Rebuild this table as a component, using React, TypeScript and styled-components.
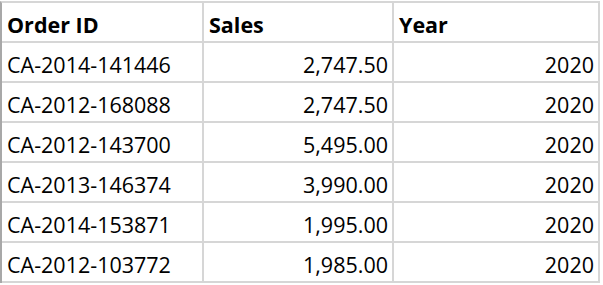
import { Fragment } from "react";
import { createGlobalStyle, styled } from "styled-components";

const GlobalStyle = createGlobalStyle`
  html, body {
    margin: 0;
    padding: 0;
    background: #ffffff;
  }
  body {
    font-family: "Open Sans", "Liberation Sans", sans-serif;
    color: #000000;
  }
`;

const Sheet = styled.div`
  display: grid;
  grid-template-columns: 202px 190px 206px;
  width: max-content;
  margin-top: 1px;
  border-top: 2px solid #d6d6d6;
  border-left: 2px solid #a8a8a8;
`;

const Cell = styled.div<{ $align?: "left" | "right"; $head?: boolean }>`
  box-sizing: border-box;
  height: 40px;
  display: flex;
  align-items: flex-end;
  justify-content: ${(p) => (p.$align === "right" ? "flex-end" : "flex-start")};
  padding: 0 4px 2px 5px;
  border-right: 2px solid #d6d6d6;
  border-bottom: 2px solid #d6d6d6;
  font-size: 21.5px;
  font-weight: ${(p) => (p.$head ? 700 : 400)};
  white-space: nowrap;
`;

const rows = [
  { id: "CA-2014-141446", sales: "2,747.50", year: "2020" },
  { id: "CA-2012-168088", sales: "2,747.50", year: "2020" },
  { id: "CA-2012-143700", sales: "5,495.00", year: "2020" },
  { id: "CA-2013-146374", sales: "3,990.00", year: "2020" },
  { id: "CA-2014-153871", sales: "1,995.00", year: "2020" },
  { id: "CA-2012-103772", sales: "1,985.00", year: "2020" },
];

export default function App() {
  return (
    <>
      <GlobalStyle />
      <Sheet>
        <Cell $head>Order ID</Cell>
        <Cell $head>Sales</Cell>
        <Cell $head>Year</Cell>
        {rows.map((r) => (
          <Fragment key={r.id}>
            <Cell>{r.id}</Cell>
            <Cell $align="right">{r.sales}</Cell>
            <Cell $align="right">{r.year}</Cell>
          </Fragment>
        ))}
      </Sheet>
    </>
  );
}
